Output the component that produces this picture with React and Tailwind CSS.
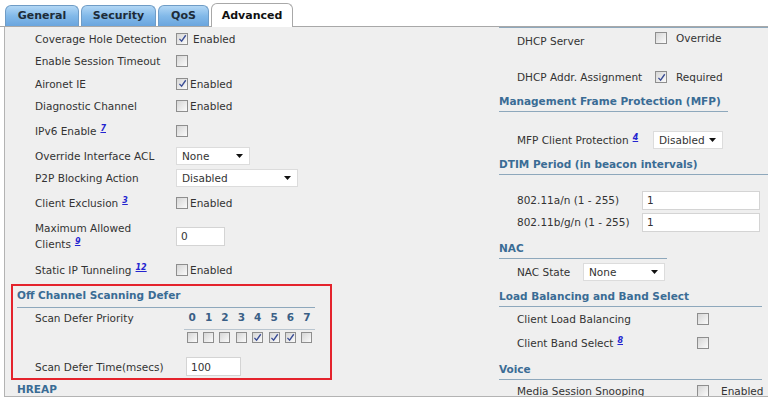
import React from 'react';

const Check = ({ checked, small }) => (
  <span
    className={`inline-flex shrink-0 items-center justify-center border border-[#8e8e8e] bg-linear-to-br from-[#d6d6d6] to-[#fbfbfb] ${
      small ? 'h-[11px] w-[11px]' : 'h-[12px] w-[12px]'
    }`}
  >
    {checked && (
      <svg viewBox="0 0 10 10" className="h-[9px] w-[9px]">
        <path d="M1.6 5.4 L4 7.9 L8.6 1.4" fill="none" stroke="#3a4d95" strokeWidth="1.5" />
      </svg>
    )}
  </span>
);

const Select = ({ value, className }) => (
  <span className={`flex h-[18px] items-center justify-between border border-[#dcdcdc] bg-white pl-[5px] pr-[6px] ${className}`}>
    <span>{value}</span>
    <svg width="7" height="4" viewBox="0 0 7 4">
      <path d="M0 0h7L3.5 4z" fill="#111" />
    </svg>
  </span>
);

const Input = ({ value, className }) => (
  <span className={`flex h-[19px] items-center border border-[#d4d4d4] bg-white pl-[4px] ${className}`}>{value}</span>
);

const Sup = ({ n }) => (
  <sup className="ml-[4px] text-[8px] font-bold italic text-[#2424d0] underline">{n}</sup>
);

const Heading = ({ children, className }) => (
  <div className={`flex h-[22px] items-center border-b border-[#8ea8bc] font-bold text-[#3a6c95] ${className}`}>
    {children}
  </div>
);

const Row = ({ label, h, children }) => (
  <div className={`flex items-center pl-[30px] ${h}`}>
    <div className="w-[141px]">{label}</div>
    {children}
  </div>
);

const tabs = [
  { name: 'General', w: 'w-[74px]' },
  { name: 'Security', w: 'w-[75px]' },
  { name: 'QoS', w: 'w-[51px]' },
];

export default function App() {
  return (
    <div className="h-[397px] w-[768px] overflow-hidden bg-white font-['DejaVu_Sans',sans-serif] text-[10.5px] leading-[14px] text-[#333]">
      {/* tab strip */}
      <div className="flex h-[27px] items-end gap-[2px] border-b border-[#a8a8a8] pl-[5px]">
        {tabs.map((t) => (
          <div
            key={t.name}
            className={`flex h-[21px] items-center justify-center rounded-t-[6px] border border-b-0 border-[#6f9cc6] bg-linear-to-b from-[#b2d7f5] via-[#82b9e9] to-[#6aa5de] text-[11px] font-bold text-[#1d2b38] ${t.w}`}
          >
            {t.name}
          </div>
        ))}
        <div className="-mb-px flex h-[24px] w-[82px] items-center justify-center rounded-t-[6px] border border-b-0 border-[#a8a8a8] bg-white text-[11px] font-bold text-[#111]">
          Advanced
        </div>
      </div>

      <div className="ml-[4px] flex h-[370px] overflow-hidden border-b border-l border-[#b3b3b3] bg-[#efefef]">
        {/* left column */}
        <div className="w-[494px] shrink-0">
          <Row label="Coverage Hole Detection" h="h-[23px]">
            <Check checked />
            <span className="ml-[5px]">Enabled</span>
          </Row>
          <Row label="Enable Session Timeout" h="h-[22px]">
            <Check />
          </Row>
          <Row label="Aironet IE" h="h-[23px]">
            <Check checked />
            <span className="ml-[2px]">Enabled</span>
          </Row>
          <Row label="Diagnostic Channel" h="h-[22px]">
            <Check />
            <span className="ml-[2px]">Enabled</span>
          </Row>
          <Row label={<>IPv6 Enable<Sup n="7" /></>} h="h-[28px]">
            <Check />
          </Row>
          <Row label="Override Interface ACL" h="h-[22px]">
            <Select value="None" className="w-[74px]" />
          </Row>
          <Row label="P2P Blocking Action" h="h-[22px]">
            <Select value="Disabled" className="w-[122px]" />
          </Row>
          <Row label={<>Client Exclusion<Sup n="3" /></>} h="h-[27px]">
            <Check />
            <span className="ml-[2px]">Enabled</span>
          </Row>
          <div className="flex h-[40px] items-center pl-[30px]">
            <div className="w-[141px] leading-[16px]">
              Maximum Allowed
              <br />
              Clients<Sup n="9" />
            </div>
            <Input value="0" className="w-[49px]" />
          </div>
          <Row label={<>Static IP Tunneling<Sup n="12" /></>} h="h-[28px]">
            <Check />
            <span className="ml-[2px]">Enabled</span>
          </Row>

          {/* highlighted section */}
          <div className="ml-[6px] h-[96px] w-[321px] border-2 border-[#e4232c]">
            <Heading className="ml-[4px] h-[19px] w-[298px] pb-[3px]">Off Channel Scanning Defer</Heading>
            <div className="flex">
              <div className="w-[171px] pl-[22px] pt-[3px]">Scan Defer Priority</div>
              <div className="w-[131px]">
                <div className="grid h-[22px] grid-cols-8 items-center border-b border-[#b9c5cf] pb-[3px] font-bold text-[#3a5f86]">
                  {[0, 1, 2, 3, 4, 5, 6, 7].map((n) => (
                    <span key={n} className="text-center">{n}</span>
                  ))}
                </div>
                <div className="mt-[2px] grid grid-cols-8">
                  {[0, 1, 2, 3, 4, 5, 6, 7].map((n) => (
                    <span key={n} className="flex justify-center">
                      <Check small checked={n >= 4 && n <= 6} />
                    </span>
                  ))}
                </div>
              </div>
            </div>
            <div className="mt-[12px] flex h-[23px] items-center">
              <div className="w-[173px] pl-[22px]">Scan Defer Time(msecs)</div>
              <Input value="100" className="w-[55px]" />
            </div>
          </div>
          <div className="flex h-[17px] items-center pl-[12px] font-bold text-[#3a6c95]">HREAP</div>
        </div>

        {/* right column */}
        <div className="flex-1 border-t border-[#8ea8bc]">
          <div className="flex h-[26px] pl-[18px]">
            <div className="flex w-[138px] items-center">DHCP Server</div>
            <div className="mt-[3px] flex items-center gap-[9px] self-start">
              <Check />
              <span>Override</span>
            </div>
          </div>
          <div className="mt-[10px] flex h-[26px] items-center pl-[18px]">
            <div className="w-[138px]">DHCP Addr. Assignment</div>
            <Check checked />
            <span className="ml-[9px]">Required</span>
          </div>
          <Heading className="w-[229px]">Management Frame Protection (MFP)</Heading>
          <div className="mt-[15px] flex h-[26px] items-center pl-[18px]">
            <div className="w-[136px]">
              MFP Client Protection<Sup n="4" />
            </div>
            <Select value="Disabled" className="w-[70px]" />
          </div>
          <Heading>DTIM Period (in beacon intervals)</Heading>
          <div className="mt-[14px] flex h-[22px] items-center pl-[18px]">
            <div className="w-[125px]">802.11a/n (1 - 255)</div>
            <Input value="1" className="w-[118px]" />
          </div>
          <div className="flex h-[22px] items-center pl-[18px]">
            <div className="w-[125px]">802.11b/g/n (1 - 255)</div>
            <Input value="1" className="w-[118px]" />
          </div>
          <Heading className="mt-[4px] w-[168px]">NAC</Heading>
          <div className="mt-[2px] flex h-[22px] items-center pl-[18px]">
            <div className="w-[66px]">NAC State</div>
            <Select value="None" className="w-[82px]" />
          </div>
          <Heading className="mt-[2px] w-[263px]">Load Balancing and Band Select</Heading>
          <div className="flex h-[23px] items-center pl-[18px]">
            <div className="w-[180px]">Client Load Balancing</div>
            <Check />
          </div>
          <div className="flex h-[25px] items-center pl-[18px]">
            <div className="w-[180px]">
              Client Band Select<Sup n="8" />
            </div>
            <Check />
          </div>
          <Heading className="mt-[3px] w-[263px]">Voice</Heading>
          <div className="flex h-[22px] items-center pl-[18px]">
            <div className="w-[180px]">Media Session Snooping</div>
            <Check />
            <span className="ml-[12px]">Enabled</span>
          </div>
        </div>
      </div>
    </div>
  );
}
